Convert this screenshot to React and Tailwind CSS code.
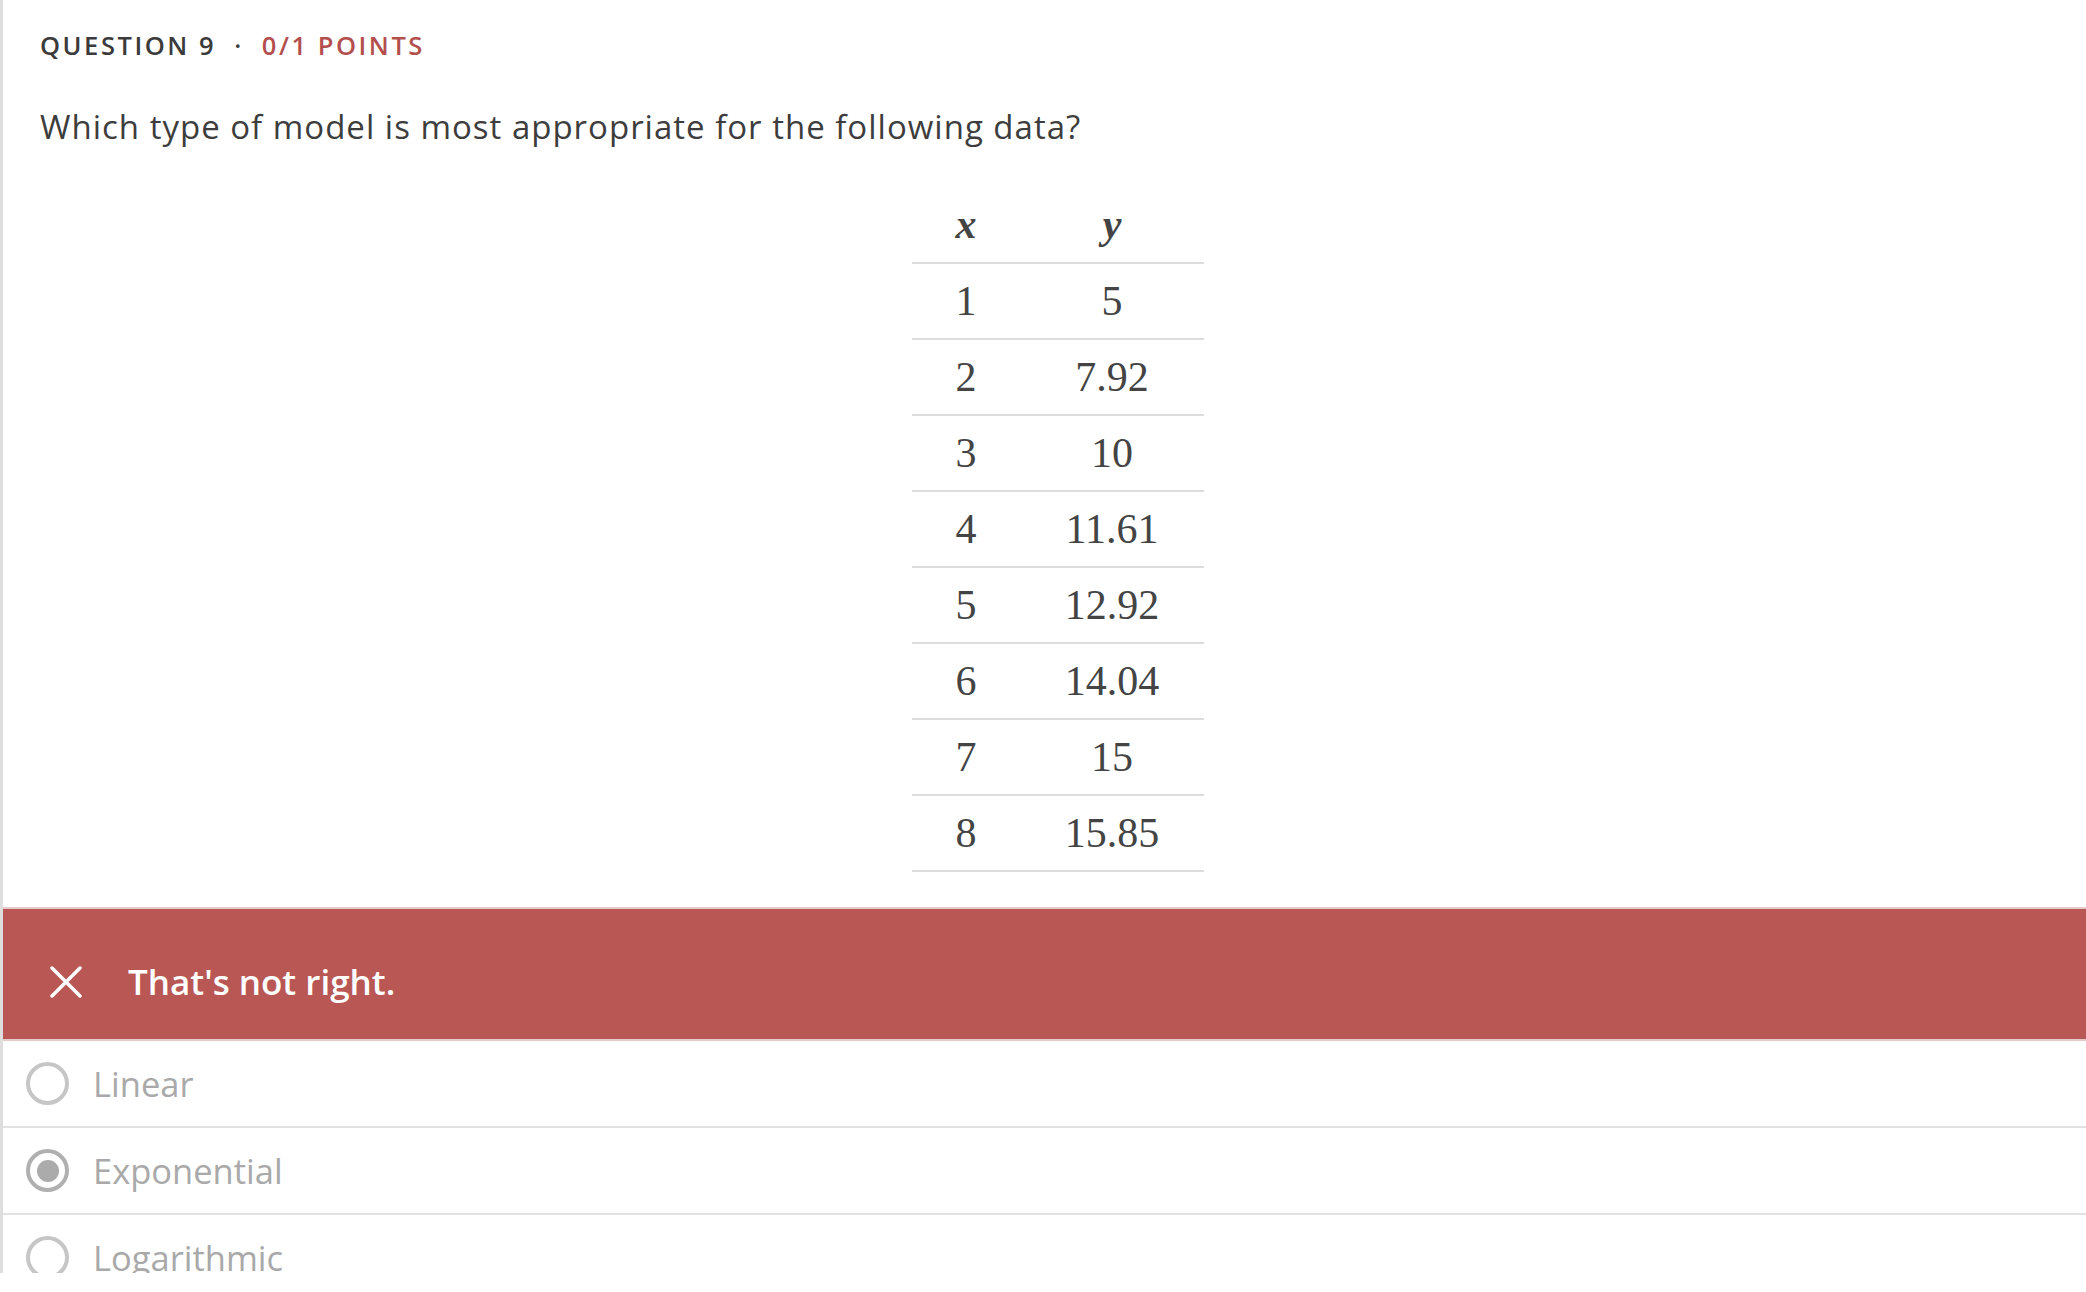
import React from "react";

const rows = [
  ["1", "5"],
  ["2", "7.92"],
  ["3", "10"],
  ["4", "11.61"],
  ["5", "12.92"],
  ["6", "14.04"],
  ["7", "15"],
  ["8", "15.85"],
];

const options = [
  { label: "Linear", selected: false },
  { label: "Exponential", selected: true },
  { label: "Logarithmic", selected: false },
];

const Radio = ({ selected }) => (
  <span
    className={`flex items-center justify-center w-[43px] h-[43px] rounded-full border-[4px] ${
      selected ? "border-[#b0b0b0]" : "border-[#c6c6c6]"
    }`}
  >
    {selected && <span className="w-[22px] h-[22px] rounded-full bg-[#ababab]" />}
  </span>
);

export default function App() {
  return (
    <div className="w-[2086px] h-[1292px] bg-white" style={{ fontFamily: "'Open Sans', sans-serif" }}>
      <div className="h-[1273px] overflow-hidden border-l-[3px] border-[#dedede]">
        {/* Header */}
        <div className="pl-[37px] pt-[27px]">
          <div className="flex items-center text-[25.5px] leading-[36px] font-semibold tracking-[0.1em] text-[#3b3b3b]">
            <span>QUESTION 9</span>
            <span className="mx-[18px]">·</span>
            <span className="text-[#b34f4d]">0/1 POINTS</span>
          </div>
          <p className="mt-[40px] text-[33px] leading-[48px] tracking-[1px] text-[#3d3d3d]">
            Which type of model is most appropriate for the following data?
          </p>
        </div>

        {/* Data table */}
        <div className="flex justify-start pl-[909px] mt-[36px]">
          <table
            className="border-collapse text-[#444]"
            style={{ fontFamily: "'Liberation Serif', 'Times New Roman', serif" }}
          >
            <thead>
              <tr className="h-[76px] border-b-2 border-[#dcdcdc]">
                <th className="w-[108px] p-0 text-[42px] font-bold italic text-center">x</th>
                <th className="w-[184px] p-0 text-[42px] font-bold italic text-center">y</th>
              </tr>
            </thead>
            <tbody>
              {rows.map(([x, y]) => (
                <tr key={x} className="h-[76px] border-b-2 border-[#dcdcdc]">
                  <td className="p-0 text-[42px] text-center">{x}</td>
                  <td className="p-0 text-[42px] text-center">{y}</td>
                </tr>
              ))}
            </tbody>
          </table>
        </div>

        {/* Feedback banner */}
        <div className="mt-[35px] h-[134px] pt-[16px] flex items-center bg-[#b95755] border-y-2 border-[#e6caca]">
          <svg width="32" height="32" viewBox="0 0 32 32" className="ml-[47px]">
            <path d="M2 2 L30 30 M30 2 L2 30" stroke="#fff" strokeWidth="3.5" strokeLinecap="round" />
          </svg>
          <span className="ml-[46px] text-[35px] font-semibold text-white">That's not right.</span>
        </div>

        {/* Options */}
        <div>
          {options.map((o) => (
            <div
              key={o.label}
              className="h-[87px] flex items-center pl-[23px] border-b-2 border-[#e2e2e2]"
            >
              <Radio selected={o.selected} />
              <span className="ml-[24px] text-[34.5px] text-[#a9a9a9]">{o.label}</span>
            </div>
          ))}
        </div>
      </div>
    </div>
  );
}
